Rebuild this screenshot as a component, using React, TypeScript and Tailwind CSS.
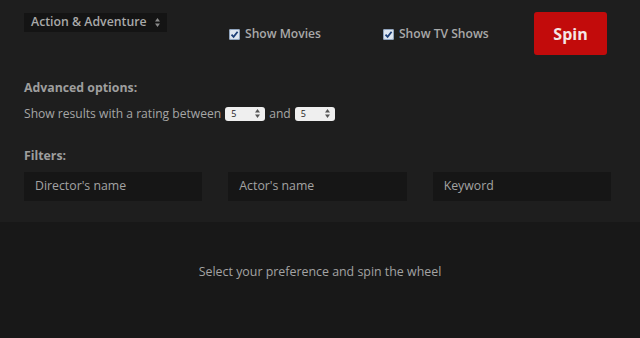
import React from "react";

// small up/down arrows used by the native-looking selects
function UpDown({ className = "" }: { className?: string }) {
  return (
    <svg width="5" height="9" viewBox="0 0 5 9" className={className}>
      <path d="M2.5 0 L5 3.5 L0 3.5 Z" fill="currentColor" />
      <path d="M2.5 9 L5 5.5 L0 5.5 Z" fill="currentColor" />
    </svg>
  );
}

function Check({ label }: { label: string }) {
  return (
    <label className="flex items-center gap-[5px] text-[12.1px] font-semibold text-[#a9a9a9]">
      <span className="flex h-[11px] w-[11px] items-center justify-center rounded-[2px] bg-[#dde5f0] shadow-[inset_0_0_0_1px_#8fa3bd]">
        <svg width="9" height="9" viewBox="0 0 9 9">
          <path d="M1.5 4.6 L3.6 6.8 L7.6 1.8" stroke="#1c3f78" strokeWidth="1.8" fill="none" />
        </svg>
      </span>
      {label}
    </label>
  );
}

function RatingSelect() {
  return (
    <span className="mx-[4px] inline-flex h-[14px] w-[40px] items-center justify-between rounded-[3px] bg-[#efefef] pl-[6px] pr-[5px] align-middle text-[9px] text-[#222]">
      5
      <UpDown className="text-[#555]" />
    </span>
  );
}

export default function App() {
  return (
    <div
      className="flex h-[338px] w-[640px] flex-col bg-[#181818]"
      style={{ fontFamily: '"Open Sans", "Noto Sans", sans-serif' }}
    >
      <div className="h-[222px] bg-[#1e1e1e] px-6 pt-3">
        {/* top row */}
        <div className="flex h-[43px] items-start">
          <div className="mt-px flex h-[19px] w-[143px] items-center justify-between bg-[#141414] pl-[7px] pr-[7px] text-[12.3px] font-semibold text-[#a9a9a9]">
            Action &amp; Adventure
            <UpDown className="text-[#8a8a8a]" />
          </div>
          <div className="ml-[62px] mt-[13px] flex items-center">
            <Check label="Show Movies" />
            <div className="ml-[62px]">
              <Check label="Show TV Shows" />
            </div>
          </div>
          <button className="ml-auto mr-[9px] flex h-[43px] w-[73px] items-center justify-center rounded-[3px] bg-[#c20b0b] text-[16px] font-bold text-[#f4e6e6]">
            Spin
          </button>
        </div>

        <div className="mt-[24px] text-[12.3px] font-bold leading-[17px] text-[#9e9e9e]">
          Advanced options:
        </div>
        <div className="mt-[9px] flex items-center text-[12.1px] leading-[17px] text-[#a6a6a6]">
          Show results with a rating between
          <RatingSelect />
          and
          <RatingSelect />
        </div>

        <div className="mt-[25px] text-[12.3px] font-bold leading-[17px] text-[#9e9e9e]">
          Filters:
        </div>
        <div className="mt-[8px] flex gap-[26px] pr-[5px]">
          {["Director's name", "Actor's name", "Keyword"].map((p) => (
            <div
              key={p}
              className="flex h-[29px] flex-1 items-center bg-[#161616] pl-[11px] text-[12.3px] text-[#a3a3a3]"
            >
              {p}
            </div>
          ))}
        </div>
      </div>

      <div className="flex flex-1 items-start justify-center pt-[41px] text-[12.4px] text-[#a3a3a3]">
        Select your preference and spin the wheel
      </div>
    </div>
  );
}
